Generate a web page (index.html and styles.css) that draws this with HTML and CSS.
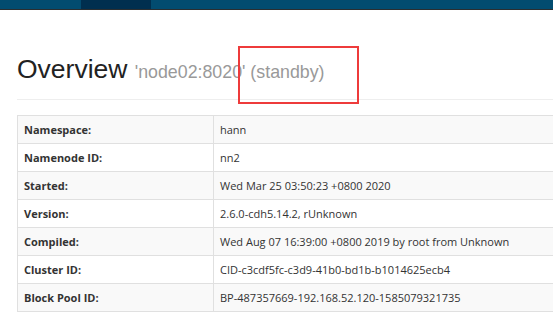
FILE: index.html
```html
<!DOCTYPE html>
<html>
	<head>
		<meta charset="UTF-8">
		<title>Namenode information</title>
		<link rel="stylesheet" href="styles.css">
	</head>
	<body>
		<div class="navbar">
			<div class="nav-item"></div>
			<div class="nav-item active"></div>
		</div>
		<div class="container">
			<div class="page-header">
				<h1>Overview <small>'node02:8020' (standby)</small></h1>
			</div>
			<table class="overview">
				<tr><th>Namespace:</th><td>hann</td></tr>
				<tr><th>Namenode ID:</th><td>nn2</td></tr>
				<tr><th>Started:</th><td>Wed Mar 25 03:50:23 +0800 2020</td></tr>
				<tr><th>Version:</th><td>2.6.0-cdh5.14.2, rUnknown</td></tr>
				<tr><th>Compiled:</th><td>Wed Aug 07 16:39:00 +0800 2019 by root from Unknown</td></tr>
				<tr><th>Cluster ID:</th><td>CID-c3cdf5fc-c3d9-41b0-bd1b-b1014625ecb4</td></tr>
				<tr><th>Block Pool ID:</th><td>BP-487357669-192.168.52.120-1585079321735</td></tr>
			</table>
		</div>
		<div class="mark"></div>
	</body>
</html>
```
FILE: styles.css
```css
*{margin: 0;padding: 0;box-sizing: border-box;}
body{background: #fff;overflow: hidden;position: relative;font-family: "Open Sans", "Liberation Sans", sans-serif;color: #333;}
.navbar{height: 10px;background: #024c70;border-bottom: 1px solid #2b2e30;display: flex;}
.nav-item{width: 81px;}
.nav-item.active{width: 70px;background: #002f4f;}
.container{padding-left: 17px;width: 600px;}
.page-header{margin-top: 45px;padding-bottom: 12px;border-bottom: 1px solid #eee;}
h1{font-family: "Liberation Sans", Arial, sans-serif;font-weight: normal;font-size: 26.5px;line-height: 29px;color: #222;}
h1 small{font-size: 17.8px;color: #999;}
.overview{margin-top: 15px;width: 100%;border-collapse: collapse;font-size: 11px;}
.overview th, .overview td{border: 1px solid #e0e0e0;padding: 5px 6px 4px;line-height: 18px;text-align: left;}
.overview th{width: 196px;font-weight: bold;}
.overview tr:nth-child(odd){background: #f9f9f9;}
.mark{position: absolute;left: 238px;top: 46px;width: 121px;height: 58px;border: 2px solid #ee3b3b;}
```
